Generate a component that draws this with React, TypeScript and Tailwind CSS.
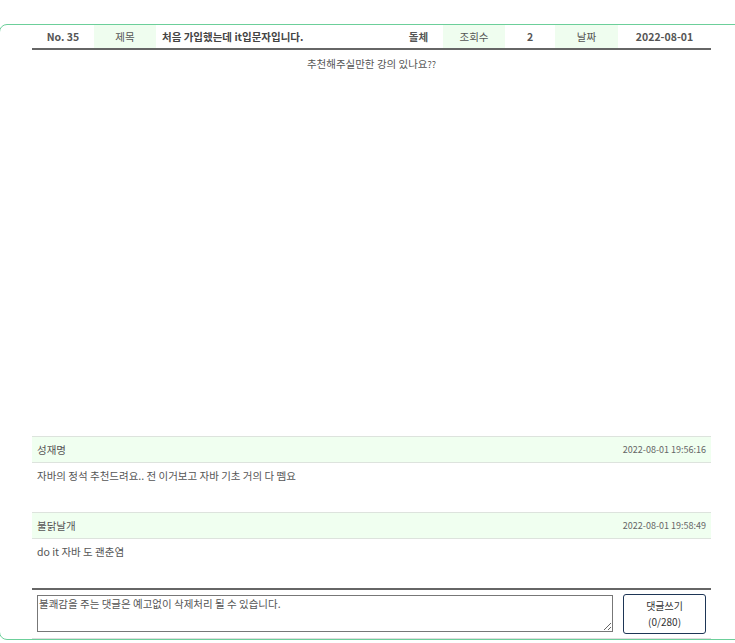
import { useState } from 'react';

const comments = [
  { name: '성재명', date: '2022-08-01 19:56:16', body: '자바의 정석 추천드려요.. 전 이거보고 자바 기초 거의 다 뗌요' },
  { name: '불닭날개', date: '2022-08-01 19:58:49', body: 'do it 자바 도 괜춘염' },
];

export default function App() {
  const [text, setText] = useState('');

  return (
    <div className="w-[735px] h-[643px] overflow-hidden bg-white font-['Noto_Sans_CJK_KR','Noto_Sans',sans-serif] text-[#555]">
      {/* outer card */}
      <div className="mt-[24px] ml-[-1px] w-[780px] h-[616px] border border-[#6ccf9a] rounded-[8px] pl-[32px] flex flex-col">
        <div className="w-[679px] flex flex-col flex-1">
          {/* post header */}
          <div className="flex h-[25px] border-b-2 border-[#666] text-[10.5px] font-bold items-stretch">
            <div className="w-[62px] flex items-center justify-center">No. 35</div>
            <div className="w-[62px] flex items-center justify-center bg-[#effdef] font-normal">제목</div>
            <div className="w-[238px] flex items-center pl-[6px] text-[#444]">처음 가입했는데 it입문자입니다.</div>
            <div className="w-[49px] flex items-center justify-center">돌체</div>
            <div className="w-[62px] flex items-center justify-center bg-[#effdef] font-normal">조회수</div>
            <div className="w-[50px] flex items-center justify-center">2</div>
            <div className="w-[63px] flex items-center justify-center bg-[#effdef] font-normal">날짜</div>
            <div className="flex-1 flex items-center justify-center">2022-08-01</div>
          </div>

          {/* post body */}
          <div className="h-[386px] pt-[6px] text-center text-[10.5px]">
            추천해주실만한 강의 있나요<span className="text-[9px]">??</span>
          </div>

          {/* comments */}
          {comments.map((c) => (
            <div key={c.date} className="h-[76px]">
              <div className="h-[27px] bg-[#f0fff0] border-y border-[#dde3dd] flex items-center justify-between px-[5px]">
                <span className="text-[10.5px]">{c.name}</span>
                <span className="text-[9px] text-[#666]">{c.date}</span>
              </div>
              <div className="px-[5px] pt-[5px] text-[10.5px]">{c.body}</div>
            </div>
          ))}

          {/* write form */}
          <div className="mt-auto border-t-2 border-[#666] border-b border-b-[#ddd] flex items-start gap-[10px] pt-[4px] px-[5px] h-[51px]">
            <textarea
              value={text}
              onChange={(e) => setText(e.target.value.slice(0, 280))}
              placeholder="불쾌감을 주는 댓글은 예고없이 삭제처리 될 수 있습니다."
              className="w-[577px] h-[37px] mt-[1px] border border-[#777] text-[10.5px] leading-[14px] px-[1px] py-[1px] text-[#333] placeholder:text-[#555] outline-none resize"
            />
            <button className="w-[83px] h-[40px] border border-[#1e3656] rounded-[3px] bg-white text-[10px] text-[#333] leading-[16px] flex flex-col items-center justify-center">
              <span>댓글쓰기</span>
              <span>({text.length}/280)</span>
            </button>
          </div>
        </div>
      </div>
    </div>
  );
}
